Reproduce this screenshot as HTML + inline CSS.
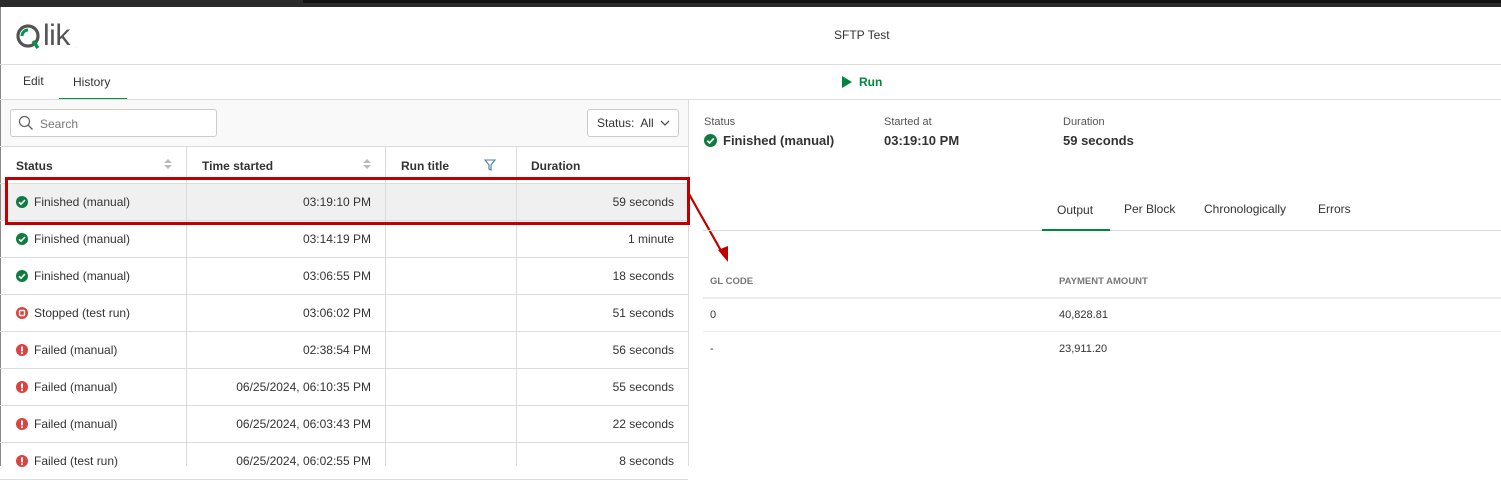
<!DOCTYPE html>
<html><head><meta charset="utf-8"><style>
*{margin:0;padding:0;box-sizing:border-box}
body{width:1501px;height:466px;overflow:hidden;background:#fff;font-family:"Liberation Sans",sans-serif;color:#404040;position:relative;font-size:12px}
.abs{position:absolute}
.topbar{left:0;top:0;width:1501px;height:7px;background:#2b2b2b}
.topbar2{left:303px;top:0;width:1198px;height:3px;background:#111}
.hline{position:absolute;height:1px;background:#dcdcdc}
.vline{position:absolute;width:1px;background:#dcdcdc}
.t{position:absolute;white-space:nowrap}
</style></head><body>
<div class="abs topbar"></div><div class="abs topbar2"></div>
<div class="vline" style="left:0;top:7px;height:459px;background:#888"></div>
<svg class="abs" style="left:15px;top:23px" width="30" height="30" viewBox="0 0 30 30"><circle cx="13" cy="13" r="10" fill="none" stroke="#545454" stroke-width="3.2"/><path d="M7 13a6 6 0 0 1 6-6" stroke="#009845" stroke-width="3" fill="none"/><path d="M18 18l5 7" stroke="#009845" stroke-width="3.4"/></svg>
<div class="t" style="left:43px;top:19px;font-size:30px;color:#545454;letter-spacing:-0.5px">lik</div>
<div class="t" style="left:76px;top:44px;font-size:4px;color:#999">.</div>
<div class="t" style="left:834px;top:28px;font-size:12px;color:#333">SFTP Test</div>
<div class="hline" style="left:0;top:64px;width:1501px"></div>
<div class="t" style="left:23px;top:74px;font-size:12px;color:#333">Edit</div>
<div class="t" style="left:73px;top:75px;font-size:12px;color:#333">History</div>
<div class="abs" style="left:59px;top:98px;width:68px;height:2px;background:#009845"></div>
<svg class="abs" style="left:841px;top:76px" width="12" height="12"><path d="M1 0L11 6L1 12Z" fill="#00873d"/></svg>
<div class="t" style="left:859px;top:75px;font-size:12px;color:#00873d;font-weight:bold">Run</div>
<div class="hline" style="left:0;top:99px;width:1501px"></div>
<div class="abs" style="left:1px;top:100px;width:687px;height:47px;background:#f9f9f9"></div>
<div class="abs" style="left:10px;top:109px;width:207px;height:28px;border:1px solid #ccc;border-radius:3px;background:#fff"></div>
<svg class="abs" style="left:18px;top:115px" width="16" height="16"><circle cx="6.5" cy="6.5" r="5" fill="none" stroke="#666" stroke-width="1.3"/><path d="M10 10l4.5 4.5" stroke="#666" stroke-width="1.4"/></svg>
<div class="t" style="left:40px;top:117px;color:#777">Search</div>
<div class="abs" style="left:587px;top:109px;width:92px;height:28px;border:1px solid #ccc;border-radius:3px;background:#fff"></div>
<div class="t" style="left:597px;top:116px;color:#333">Status:&nbsp; All</div>
<svg class="abs" style="left:660px;top:119px" width="10" height="8"><path d="M1 2l4 4 4-4" stroke="#555" stroke-width="1.3" fill="none"/></svg>
<div class="hline" style="left:0;top:146px;width:688px"></div>
<div class="vline" style="left:688px;top:100px;height:366px"></div>
<div class="vline" style="left:186px;top:147px;height:319px"></div>
<div class="vline" style="left:385px;top:147px;height:319px"></div>
<div class="vline" style="left:516px;top:147px;height:319px"></div>
<div class="t" style="left:16px;top:159px;color:#333;font-weight:bold">Status</div>
<div class="t" style="left:202px;top:159px;color:#333;font-weight:bold">Time started</div>
<div class="t" style="left:401px;top:159px;color:#333;font-weight:bold">Run title</div>
<div class="t" style="left:531px;top:159px;color:#333;font-weight:bold">Duration</div>
<svg class="abs" style="left:164px;top:158px" width="8" height="12"><path d="M0 5L4 1 8 5Z M0 7L4 11 8 7Z" fill="#bbb"/></svg>
<svg class="abs" style="left:363px;top:158px" width="8" height="12"><path d="M0 5L4 1 8 5Z M0 7L4 11 8 7Z" fill="#bbb"/></svg>
<svg class="abs" style="left:484px;top:159px" width="12" height="12"><path d="M1 1h10L7 6v5L5 10V6Z" fill="none" stroke="#4a7fa0" stroke-width="1.1"/></svg>
<div class="hline" style="left:0;top:183px;width:688px"></div>
<div class="abs" style="left:1px;top:184px;width:687px;height:36px;background:#f0f0f0"></div>
<div class="vline" style="left:186px;top:184px;height:36px"></div><div class="vline" style="left:385px;top:184px;height:36px"></div><div class="vline" style="left:516px;top:184px;height:36px"></div>
<div id="rows"></div>
<script>
var r=[["g","Finished (manual)","03:19:10 PM","59 seconds"],["g","Finished (manual)","03:14:19 PM","1 minute"],["g","Finished (manual)","03:06:55 PM","18 seconds"],["s","Stopped (test run)","03:06:02 PM","51 seconds"],["f","Failed (manual)","02:38:54 PM","56 seconds"],["f","Failed (manual)","06/25/2024, 06:10:35 PM","55 seconds"],["f","Failed (manual)","06/25/2024, 06:03:43 PM","22 seconds"],["f","Failed (test run)","06/25/2024, 06:02:55 PM","8 seconds"]];
var h="";
r.forEach(function(x,i){var y=183+i*37;var ty=y+12;
h+='<div class="hline" style="left:0;top:'+(y+37)+'px;width:688px"></div>';
var ic;
if(x[0]=="g")ic='<svg class="abs" style="left:16px;top:'+(ty+1)+'px" width="12" height="12"><circle cx="6" cy="6" r="6" fill="#0f7b3e"/><path d="M3 6.2l2 2 4-4.2" stroke="#fff" stroke-width="1.6" fill="none"/></svg>';
else if(x[0]=="s")ic='<svg class="abs" style="left:16px;top:'+(ty+1)+'px" width="12" height="12"><circle cx="6" cy="6" r="6" fill="#dc423f"/><rect x="3.5" y="3.5" width="5" height="5" rx="1" fill="none" stroke="#fff" stroke-width="1.4"/></svg>';
else ic='<svg class="abs" style="left:16px;top:'+(ty+1)+'px" width="12" height="12"><circle cx="6" cy="6" r="6" fill="#dc423f"/><rect x="5" y="2.5" width="2" height="4.8" fill="#fff"/><rect x="5" y="8.3" width="2" height="1.8" fill="#fff"/></svg>';
h+=ic+'<div class="t" style="left:34px;top:'+ty+'px;color:#333">'+x[1]+'</div>';
h+='<div class="t" style="right:'+(1501-371)+'px;top:'+ty+'px;color:#333">'+x[2]+'</div>';
h+='<div class="t" style="right:'+(1501-674)+'px;top:'+ty+'px;color:#333">'+x[3]+'</div>';});
document.getElementById("rows").innerHTML=h;
</script>
<div class="abs" style="left:5px;top:177px;width:685px;height:48px;border:3px solid #c00000"></div>
<svg class="abs" style="left:686px;top:190px" width="50" height="80"><path d="M3 4L38 66" stroke="#c00000" stroke-width="2.2"/><path d="M32 60L42 72L42 56Z" fill="#c00000"/></svg>
<div class="t" style="left:704px;top:116px;font-size:11px;color:#555">Status</div>
<div class="t" style="left:884px;top:116px;font-size:11px;color:#555">Started at</div>
<div class="t" style="left:1063px;top:116px;font-size:11px;color:#555">Duration</div>
<svg class="abs" style="left:704px;top:134px" width="13" height="13"><circle cx="6.5" cy="6.5" r="6.5" fill="#0f7b3e"/><path d="M3.3 6.7l2.2 2.2 4.3-4.5" stroke="#fff" stroke-width="1.7" fill="none"/></svg>
<div class="t" style="left:723px;top:133px;font-size:13px;font-weight:bold;color:#333">Finished (manual)</div>
<div class="t" style="left:884px;top:133px;font-size:13px;font-weight:bold;color:#333">03:19:10 PM</div>
<div class="t" style="left:1063px;top:133px;font-size:13px;font-weight:bold;color:#333">59 seconds</div>
<div class="t" style="left:1057px;top:203px;color:#333">Output</div>
<div class="t" style="left:1124px;top:202px;color:#333">Per Block</div>
<div class="t" style="left:1204px;top:202px;color:#333">Chronologically</div>
<div class="t" style="left:1318px;top:202px;color:#333">Errors</div>
<div class="hline" style="left:703px;top:230px;width:798px"></div>
<div class="abs" style="left:1042px;top:229px;width:68px;height:2px;background:#00873d"></div>
<div class="t" style="left:710px;top:276px;font-size:9.5px;font-weight:bold;color:#777">GL CODE</div>
<div class="t" style="left:1059px;top:276px;font-size:9.5px;font-weight:bold;color:#777">PAYMENT AMOUNT</div>
<div class="abs" style="left:703px;top:297px;width:798px;height:2px;background:#ebebeb"></div>
<div class="t" style="left:710px;top:309px;font-size:11px;color:#333">0</div>
<div class="t" style="left:1059px;top:309px;font-size:11px;color:#333">40,828.81</div>
<div class="hline" style="left:703px;top:331px;width:798px;background:#eee"></div>
<div class="t" style="left:710px;top:343px;font-size:11px;color:#333">-</div>
<div class="t" style="left:1059px;top:343px;font-size:11px;color:#333">23,911.20</div>
</body></html>
